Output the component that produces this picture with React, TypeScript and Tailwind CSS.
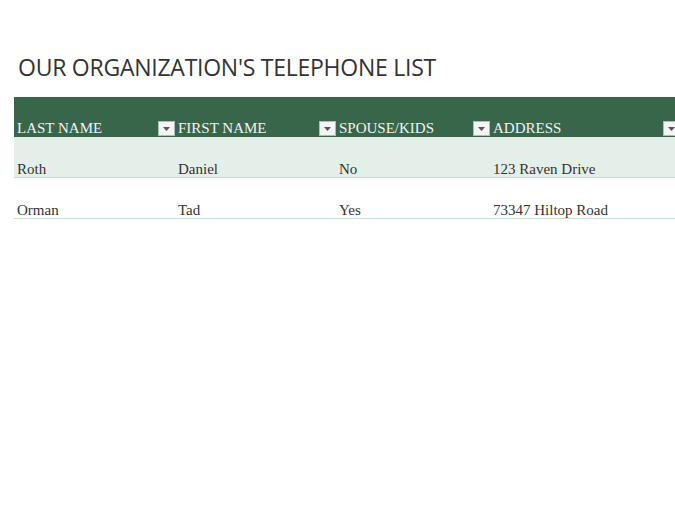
const columns = [
  { label: "LAST NAME", width: "w-[162px] pl-[3px]" },
  { label: "FIRST NAME", width: "w-[161px] pl-[2px]" },
  { label: "SPOUSE/KIDS", width: "w-[154px] pl-[2px]" },
  { label: "ADDRESS", width: "w-[190px] pl-[2px]" },
];

const rows = [
  ["Roth", "Daniel", "No", "123 Raven Drive"],
  ["Orman", "Tad", "Yes", "73347 Hiltop Road"],
];

function FilterButton() {
  return (
    <div className="w-[17px] h-[15px] shrink-0 bg-[#f4f4f4] border border-[#b8b8b8] flex items-center justify-center">
      <svg width="7" height="4" viewBox="0 0 7 4">
        <path d="M0 0 L7 0 L3.5 4 Z" fill="#555" />
      </svg>
    </div>
  );
}

export default function App() {
  return (
    <div className="w-[675px] h-[520px] overflow-hidden bg-white">
      <h1 className="pl-[18px] pt-[56px] h-[97px] text-[23px] leading-[23px] text-[#333] font-['Open_Sans',sans-serif] tracking-[-0.25px]">
        OUR ORGANIZATION'S TELEPHONE LIST
      </h1>

      <div className="ml-[14px] w-max font-['Liberation_Serif',serif] text-[15px]">
        <div className="flex h-[40px] bg-[#37664a]">
          {columns.map((col) => (
            <div
              key={col.label}
              className={`${col.width} flex items-end justify-between pr-[1px] pb-[1px]`}
            >
              <span className="text-[#f2f2f2] leading-[16px]">{col.label}</span>
              <FilterButton />
            </div>
          ))}
        </div>

        {rows.map((row, i) => (
          <div
            key={i}
            className={`flex h-[41px] border-b border-[#c5e0d2] ${i % 2 === 0 ? "bg-[#e4efe9]" : "bg-white"}`}
          >
            {row.map((cell, j) => (
              <div
                key={j}
                className={`${columns[j].width} flex items-end text-[#333]`}
              >
                <span className="leading-[16px]">{cell}</span>
              </div>
            ))}
          </div>
        ))}
      </div>
    </div>
  );
}
